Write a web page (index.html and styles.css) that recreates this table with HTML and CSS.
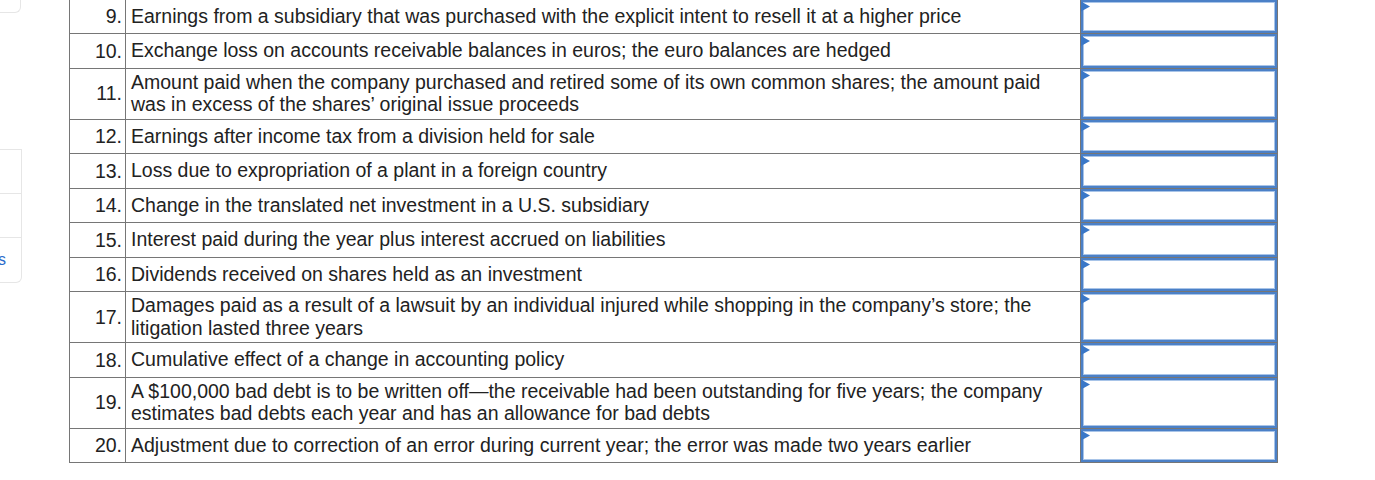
FILE: index.html
```html
<!DOCTYPE html>
<html lang="en">
<head>
<meta charset="utf-8">
<title>Classification</title>
<link rel="stylesheet" href="styles.css">
</head>
<body>
<div class="page">
  <aside class="side">
    <div class="card-top"></div>
    <div class="list">
      <div class="item"></div>
      <div class="item"></div>
      <div class="item last"><span class="link">Tools</span></div>
    </div>
  </aside>
  <div class="grid">
    <div class="num">9.</div><div class="txt">Earnings from a subsidiary that was purchased with the explicit intent to resell it at a higher price</div><div class="sel"><span class="arrow"></span></div>
    <div class="num">10.</div><div class="txt">Exchange loss on accounts receivable balances in euros; the euro balances are hedged</div><div class="sel"><span class="arrow"></span></div>
    <div class="num">11.</div><div class="txt">Amount paid when the company purchased and retired some of its own common shares; the amount paid<br>was in excess of the shares’ original issue proceeds</div><div class="sel"><span class="arrow"></span></div>
    <div class="num">12.</div><div class="txt">Earnings after income tax from a division held for sale</div><div class="sel"><span class="arrow"></span></div>
    <div class="num">13.</div><div class="txt">Loss due to expropriation of a plant in a foreign country</div><div class="sel"><span class="arrow"></span></div>
    <div class="num">14.</div><div class="txt">Change in the translated net investment in a U.S. subsidiary</div><div class="sel"><span class="arrow"></span></div>
    <div class="num">15.</div><div class="txt">Interest paid during the year plus interest accrued on liabilities</div><div class="sel"><span class="arrow"></span></div>
    <div class="num">16.</div><div class="txt">Dividends received on shares held as an investment</div><div class="sel"><span class="arrow"></span></div>
    <div class="num">17.</div><div class="txt">Damages paid as a result of a lawsuit by an individual injured while shopping in the company’s store; the<br>litigation lasted three years</div><div class="sel"><span class="arrow"></span></div>
    <div class="num">18.</div><div class="txt">Cumulative effect of a change in accounting policy</div><div class="sel"><span class="arrow"></span></div>
    <div class="num">19.</div><div class="txt">A $100,000 bad debt is to be written off—the receivable had been outstanding for five years; the company<br>estimates bad debts each year and has an allowance for bad debts</div><div class="sel"><span class="arrow"></span></div>
    <div class="num">20.</div><div class="txt">Adjustment due to correction of an error during current year; the error was made two years earlier</div><div class="sel"><span class="arrow"></span></div>
  </div>
</div>
</body>
</html>
```

FILE: styles.css
```css
html, body {
  margin: 0;
  padding: 0;
  background: #ffffff;
  overflow: hidden;
}

body {
  font-family: "Liberation Sans", Arial, sans-serif;
  color: #222222;
}

.page {
  display: flex;
  align-items: flex-start;
}

.side {
  flex: none;
  width: 22px;
  margin-right: 47px;
}

.card-top {
  width: 21px;
  height: 13px;
  box-sizing: border-box;
  border: 1px solid #e6e6e6;
  border-top: none;
  border-left: none;
  border-bottom-right-radius: 6px;
  margin-bottom: 136px;
}

.list {
  width: 22px;
}

.item {
  box-sizing: border-box;
  height: 45px;
  margin-bottom: -1px;
  border: 1px solid #e6e6e6;
  border-left: none;
  display: flex;
  align-items: center;
  justify-content: flex-end;
  overflow: hidden;
}

.item.last {
  height: 46px;
  border-bottom-right-radius: 6px;
}

.link {
  flex: none;
  font-size: 16px;
  color: #2a6ccb;
  padding-right: 15px;
}

.grid {
  display: grid;
  grid-template-columns: 55px 954px 196px;
  gap: 1px;
  background: #767676;
  border: 1px solid #767676;
  margin-top: -1.5px;
}

.num,
.txt,
.sel {
  background: #ffffff;
  min-height: 33.5px;
  box-sizing: border-box;
}

.num {
  display: flex;
  align-items: center;
  justify-content: flex-end;
  padding-right: 3px;
  font-size: 19.5px;
  line-height: 22.5px;
}

.txt {
  display: flex;
  align-items: center;
  padding: 2px 5px 3px 5px;
  font-size: 19.5px;
  line-height: 22.5px;
}

.sel {
  position: relative;
  border: 2px solid #4b80c7;
  box-shadow: inset 0 0 0 1px #a8c4e8;
}

.arrow {
  position: absolute;
  left: -2px;
  top: 0;
  width: 9px;
  height: 10px;
  background: #3a77c7;
  clip-path: polygon(0 0, 100% 50%, 0 100%);
}
```
